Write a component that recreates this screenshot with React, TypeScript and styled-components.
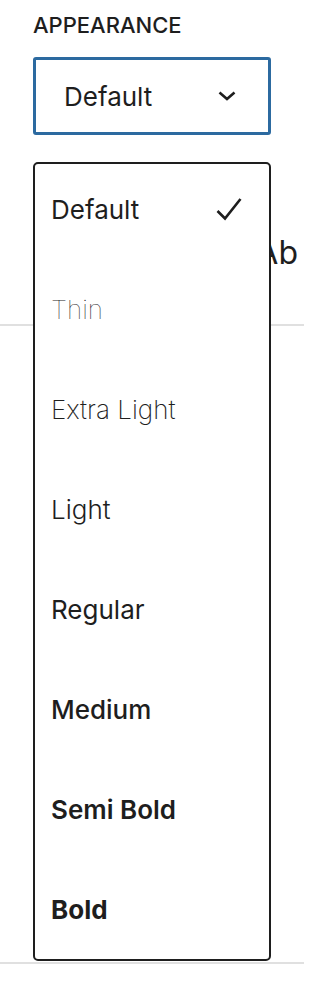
import React from 'react';
import styled, { createGlobalStyle } from 'styled-components';

const GlobalStyle = createGlobalStyle`
  html, body {
    margin: 0;
    padding: 0;
    background: #ffffff;
  }
  body {
    font-family: Inter, "Noto Sans", "Liberation Sans", sans-serif;
    color: #1e1e1e;
  }
`;

interface WeightOption {
  label: string;
  weight: number;
}

const options: WeightOption[] = [
  { label: 'Default', weight: 400 },
  { label: 'Thin', weight: 100 },
  { label: 'Extra Light', weight: 200 },
  { label: 'Light', weight: 300 },
  { label: 'Regular', weight: 400 },
  { label: 'Medium', weight: 500 },
  { label: 'Semi Bold', weight: 600 },
  { label: 'Bold', weight: 700 },
];

const Panel = styled.div`
  width: 304px;
  display: flex;
  flex-direction: column;
`;

const Section = styled.div`
  padding: 9px 33px 0;
  display: flex;
  flex-direction: column;
`;

const Label = styled.div`
  font-size: 22px;
  line-height: 32px;
  font-weight: 500;
  text-transform: uppercase;
`;

const SelectWrap = styled.div`
  position: relative;
  margin-top: 16px;
`;

const SelectButton = styled.div`
  box-sizing: border-box;
  height: 78px;
  border: 3px solid #2c6aa0;
  border-radius: 3px;
  display: flex;
  align-items: center;
  justify-content: space-between;
  padding: 0 32px 0 28px;
  font-size: 26px;
  font-weight: 400;
`;

const Menu = styled.ul`
  position: absolute;
  top: calc(100% + 27px);
  left: 0;
  z-index: 10;
  box-sizing: border-box;
  width: 238px;
  margin: 0;
  padding: 0 0 5px;
  list-style: none;
  background: #ffffff;
  border: 2px solid #1e1e1e;
  border-radius: 5px;
  display: flex;
  flex-direction: column;
  gap: 10px;
`;

const Item = styled.li<{ $weight: number }>`
  height: 90px;
  display: flex;
  align-items: center;
  justify-content: space-between;
  padding: 0 27px 0 16px;
  font-size: 26px;
  font-weight: ${({ $weight }) => $weight};
  color: #1e1e1e;
`;

const PreviewRow = styled.div`
  display: flex;
  justify-content: flex-end;
  padding: 98px 6px 51px;
  border-bottom: 2px solid #e0e0e0;
  font-size: 32px;
  line-height: 40px;
`;

const Spacer = styled.div`
  height: 636px;
  border-bottom: 2px solid #e0e0e0;
`;

const Chevron = () => (
  <svg width="18" height="10" viewBox="0 0 18 10" fill="none">
    <path d="M1.5 1.5 L9 8 L16.5 1.5" stroke="#1e1e1e" strokeWidth="2.6" />
  </svg>
);

const Check = () => (
  <svg width="26" height="24" viewBox="0 0 26 24" fill="none">
    <path d="M1.5 14 L9 21.5 L24.5 2" stroke="#1e1e1e" strokeWidth="2.6" />
  </svg>
);

const App: React.FC = () => {
  const selected = 'Default';
  return (
    <>
      <GlobalStyle />
      <Panel>
        <Section>
          <Label>Appearance</Label>
          <SelectWrap>
            <SelectButton>
              <span>Default</span>
              <Chevron />
            </SelectButton>
            <Menu>
              {options.map((o) => (
                <Item key={o.label} $weight={o.weight}>
                  <span>{o.label}</span>
                  {o.label === selected && <Check />}
                </Item>
              ))}
            </Menu>
          </SelectWrap>
        </Section>
        <PreviewRow>Ab</PreviewRow>
        <Spacer />
      </Panel>
    </>
  );
};

export default App;
